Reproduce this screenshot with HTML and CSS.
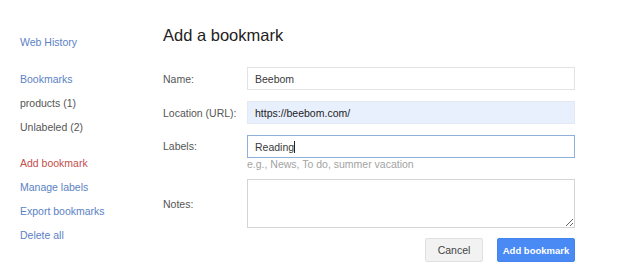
FILE: index.html
```html
<!DOCTYPE html>
<html>
<head>
<meta charset="utf-8">
<link rel="stylesheet" href="styles.css">
</head>
<body>
<div class="page">
  <nav class="sidebar">
    <div class="group">
      <a class="nav-link">Web History</a>
    </div>
    <div class="group">
      <a class="nav-link">Bookmarks</a>
      <span class="nav-item">products (1)</span>
      <span class="nav-item">Unlabeled (2)</span>
    </div>
    <div class="group">
      <a class="nav-link active">Add bookmark</a>
      <a class="nav-link">Manage labels</a>
      <a class="nav-link">Export bookmarks</a>
      <a class="nav-link">Delete all</a>
    </div>
  </nav>
  <main class="main">
    <h1 class="title">Add a bookmark</h1>
    <form class="form">
      <div class="row">
        <label class="label">Name:</label>
        <input class="field" type="text" value="Beebom">
      </div>
      <div class="row">
        <label class="label">Location (URL):</label>
        <input class="field autofill" type="text" value="https://beebom.com/">
      </div>
      <div class="row row-hint">
        <label class="label">Labels:</label>
        <div class="field-wrap">
          <div class="field focused">Reading<span class="caret"></span></div>
          <div class="hint">e.g., News, To do, summer vacation</div>
        </div>
      </div>
      <div class="row row-notes">
        <label class="label">Notes:</label>
        <textarea class="field notes"></textarea>
      </div>
      <div class="actions">
        <button type="button" class="btn btn-cancel">Cancel</button>
        <button type="button" class="btn btn-primary">Add bookmark</button>
      </div>
    </form>
  </main>
</div>
</body>
</html>
```
FILE: styles.css
```css
html, body {
  margin: 0;
  padding: 0;
  background: #ffffff;
}
body {
  font-family: "Liberation Sans", Arial, sans-serif;
  font-size: 10.5px;
  color: #444;
}
.page {
  display: flex;
  width: 640px;
  height: 275px;
}
.sidebar {
  width: 163px;
  flex: none;
  padding: 35px 0 0 20px;
  box-sizing: border-box;
  display: flex;
  flex-direction: column;
  gap: 12px;
}
.group {
  display: flex;
  flex-direction: column;
}
.nav-link, .nav-item {
  display: block;
  height: 24px;
  line-height: 14px;
  white-space: nowrap;
}
.group + .group {
  padding-top: 1px;
}
.group:last-child {
  padding-top: 0;
}
.nav-link {
  color: #5b82c5;
  text-decoration: none;
}
.nav-link.active {
  color: #c2504e;
}
.nav-item {
  color: #555;
}
.main {
  flex: 1;
  padding-top: 25px;
}
.title {
  margin: 0;
  font-size: 16.5px;
  font-weight: normal;
  color: #222;
  line-height: 20px;
  height: 42px;
}
.form {
  display: flex;
  flex-direction: column;
  width: 412px;
}
.row {
  display: flex;
  align-items: center;
  margin-bottom: 11px;
}
.label {
  width: 84px;
  flex: none;
  color: #555;
  font-size: 10.5px;
}
.field {
  box-sizing: border-box;
  width: 328px;
  height: 23px;
  border: 1px solid #e3e3e3;
  padding: 0 7px;
  font-family: "Liberation Sans", Arial, sans-serif;
  font-size: 10.5px;
  color: #3a3a3a;
  background: #fff;
  outline: none;
  margin: 0;
}
.field.autofill {
  background: #e8f0fe;
  border-color: #e3e8f2;
  color: #222;
}
div.field {
  display: flex;
  align-items: center;
}
.field.focused {
  border-color: #8fb0db;
}
.caret {
  display: inline-block;
  width: 1px;
  height: 12px;
  background: #222;
}
.row-hint {
  align-items: flex-start;
  margin-bottom: 9px;
}
.row-hint .label {
  line-height: 23px;
}
.hint {
  color: #a3a3a3;
  line-height: 12px;
  height: 12px;
}
.row-notes {
  margin-bottom: 10px;
}
.notes {
  height: 49px;
  resize: vertical;
  border-color: #d4d4d4;
}
.actions {
  display: flex;
  justify-content: flex-end;
  gap: 14px;
}
.btn {
  height: 24px;
  border-radius: 2px;
  font-family: "Liberation Sans", Arial, sans-serif;
  font-size: 10.5px;
  padding: 0;
}
.btn-cancel {
  width: 58px;
  background: #f2f2f2;
  border: 1px solid #e0e0e0;
  color: #444;
}
.btn-primary {
  width: 78px;
  background: #4a8af4;
  border: 1px solid #4583ee;
  color: #fff;
  font-weight: bold;
  font-size: 9.5px;
}
```
